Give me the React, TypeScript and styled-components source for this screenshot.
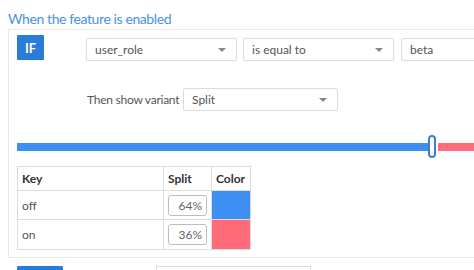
import React from "react";
import styled, { createGlobalStyle } from "styled-components";

const Global = createGlobalStyle`
  html, body { margin: 0; padding: 0; background: #fff; overflow: hidden; }
  body { font-family: Lato, "Open Sans", sans-serif; color: #555; }
`;

const Page = styled.div`
  width: 474px;
  height: 270px;
  overflow: hidden;
  padding-left: 8px;
  box-sizing: border-box;
`;

const Title = styled.div`
  height: 29px;
  box-sizing: border-box;
  padding-top: 10px;
  font-size: 14px;
  letter-spacing: -0.4px;
  line-height: 18px;
  color: #4b93dc;
  white-space: nowrap;
`;

const Card = styled.div`
  width: 700px;
  border: 1px solid #e8e8e8;
  border-right: none;
  padding: 5px 0 7px 8px;
  box-sizing: border-box;
`;

const Row = styled.div<{ $top?: number }>`
  display: flex;
  align-items: flex-start;
  margin-top: ${(p) => p.$top ?? 0}px;
`;

const Badge = styled.div`
  width: 27px;
  height: 25px;
  background: #2b7cd8;
  color: #fff;
  font-weight: 700;
  font-size: 13px;
  display: flex;
  align-items: center;
  justify-content: center;
  margin-right: 42px;
  border-radius: 1px;
`;

const Select = styled.div<{ $w: number; $gap?: number; $mt?: number }>`
  width: ${(p) => p.$w}px;
  height: 23px;
  box-sizing: border-box;
  border: 1px solid #dcdcdc;
  border-radius: 2px;
  margin-left: ${(p) => p.$gap ?? 0}px;
  margin-top: ${(p) => p.$mt ?? 0}px;
  padding: 0 10px 0 8px;
  display: flex;
  align-items: center;
  justify-content: space-between;
  font-size: 12px;
  color: #555;
  background: #fff;
  flex-shrink: 0;
`;

const Caret = styled.span`
  width: 0;
  height: 0;
  border-left: 4px solid transparent;
  border-right: 4px solid transparent;
  border-top: 4px solid #888;
`;

const Label = styled.div`
  margin-left: 70px;
  width: 96px;
  height: 23px;
  line-height: 23px;
  font-size: 12px;
  letter-spacing: -0.25px;
  color: #555;
  white-space: nowrap;
`;

const Slider = styled.div`
  width: 650px;
  height: 23px;
  margin-top: 24px;
  display: flex;
  align-items: center;
`;

const Track = styled.div<{ $color: string }>`
  height: 8px;
  background: ${(p) => p.$color};
`;

const Handle = styled.div`
  width: 8px;
  height: 23px;
  box-sizing: border-box;
  border: 2px solid #3b7fd0;
  border-radius: 4px;
  background: #fff;
  margin-right: 2px;
  flex-shrink: 0;
`;

const Table = styled.table`
  margin-top: 8px;
  border-collapse: collapse;
  font-size: 12px;
`;

const Th = styled.th<{ $w: number }>`
  width: ${(p) => p.$w}px;
  height: 24px;
  box-sizing: border-box;
  border: 1px solid #dedede;
  text-align: left;
  padding: 0 4px;
  font-weight: 700;
  color: #333;
`;

const Td = styled.td<{ $h: number }>`
  height: ${(p) => p.$h}px;
  box-sizing: border-box;
  border: 1px solid #dedede;
  padding: 0 4px;
  color: #555;
`;

const SwatchCell = styled.td<{ $color: string }>`
  border: 1px solid #dedede;
  background: ${(p) => p.$color};
  padding: 0;
`;

const PctInput = styled.div`
  width: 39px;
  height: 21px;
  box-sizing: border-box;
  border: 1px solid #bdbdbd;
  border-radius: 3px;
  text-align: right;
  padding-right: 4px;
  line-height: 19px;
  font-size: 12px;
  color: #666;
`;

const Footer = styled.div`
  display: flex;
  margin-top: 8px;
  padding-left: 9px;
`;

const FooterButton = styled.div`
  width: 46px;
  height: 24px;
  background: #2b7cd8;
  border-radius: 1px;
`;

const FooterInput = styled.div`
  width: 155px;
  height: 24px;
  margin-left: 93px;
  box-sizing: border-box;
  border: 1px solid #dcdcdc;
`;

const variants = [
  { key: "off", split: 64, color: "#3d8ff4" },
  { key: "on", split: 36, color: "#ff6b79" },
];

export default function App() {
  const first = variants[0].split;
  return (
    <Page>
      <Global />
      <Title>When the feature is enabled</Title>
      <Card>
        <Row>
          <Badge>IF</Badge>
          <Select $w={151} $mt={3}>
            user_role
            <Caret />
          </Select>
          <Select $w={151} $gap={6} $mt={3}>
            is equal to
            <Caret />
          </Select>
          <Select $w={151} $gap={7} $mt={3}>
            beta
          </Select>
        </Row>
        <Row $top={27}>
          <Label>Then show variant</Label>
          <Select $w={155} $gap={0}>
            Split
            <Caret />
          </Select>
        </Row>
        <Slider>
          <Track $color="#3d8ff4" style={{ width: `calc(${first}% - 5px)` }} />
          <Handle />
          <Track $color="#ff6b79" style={{ flex: 1 }} />
        </Slider>
        <Table>
          <thead>
            <tr>
              <Th $w={146}>Key</Th>
              <Th $w={48}>Split</Th>
              <Th $w={39}>Color</Th>
            </tr>
          </thead>
          <tbody>
            {variants.map((v, i) => (
              <tr key={v.key}>
                <Td $h={i === 0 ? 29 : 30}>{v.key}</Td>
                <Td $h={i === 0 ? 29 : 30}>
                  <PctInput>{v.split}%</PctInput>
                </Td>
                <SwatchCell $color={v.color} />
              </tr>
            ))}
          </tbody>
        </Table>
      </Card>
      <Footer>
        <FooterButton />
        <FooterInput />
      </Footer>
    </Page>
  );
}
